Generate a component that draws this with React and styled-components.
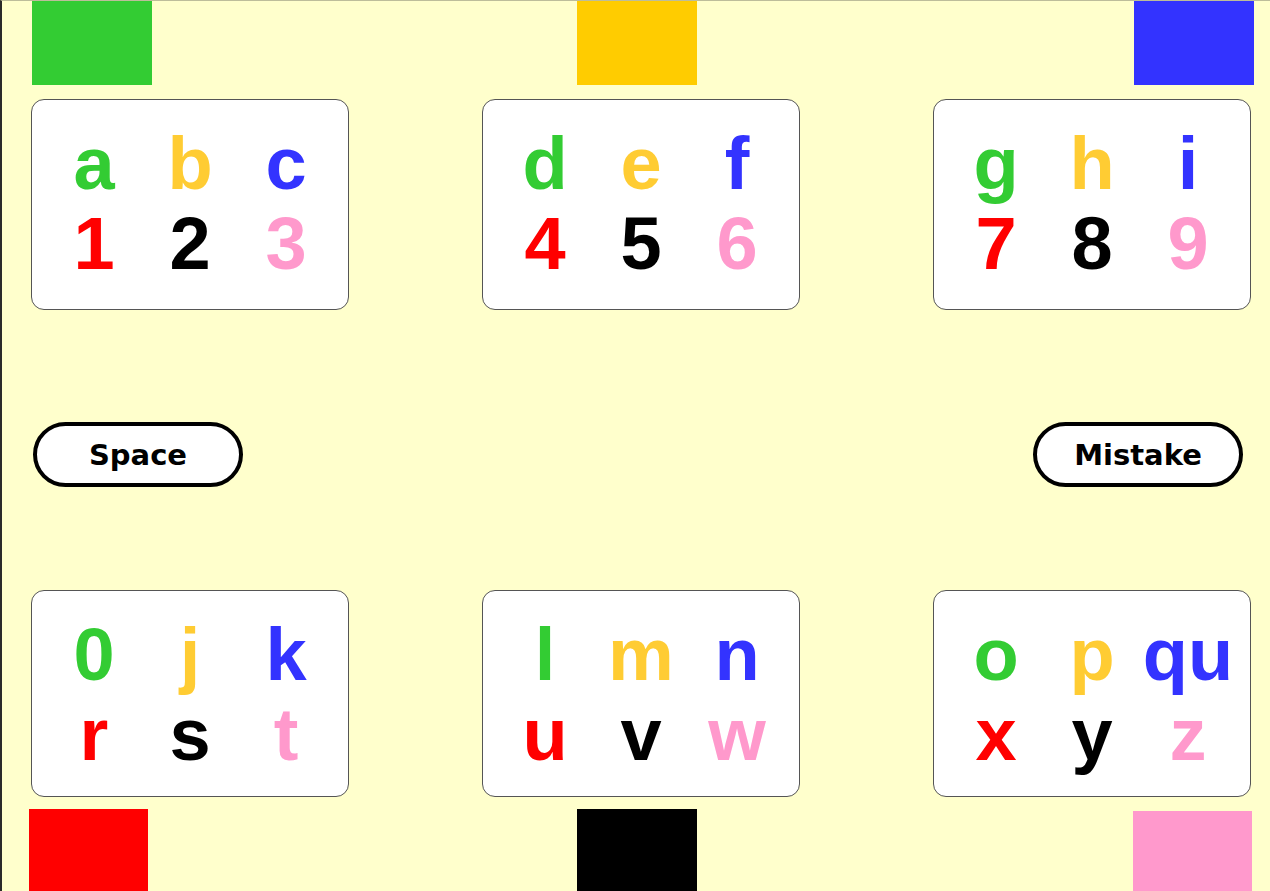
import React from "react";
import styled, { createGlobalStyle } from "styled-components";

const GlobalStyle = createGlobalStyle`
  html, body {
    margin: 0;
    padding: 0;
    background: #ffffcc;
  }
`;

const Page = styled.div`
  width: 1270px;
  height: 891px;
  box-sizing: border-box;
  border-top: 1px solid #bdbd9a;
  border-left: 2px solid #2a2a2a;
  background: #ffffcc;
  display: flex;
  flex-direction: column;
  overflow: hidden;
  font-family: "Liberation Sans", Arial, sans-serif;
`;

const SwatchRow = styled.div`
  display: flex;
  align-items: flex-start;
  height: ${(p) => p.$h}px;
  margin-top: ${(p) => p.$mt || 0}px;
`;

const Swatch = styled.div`
  width: ${(p) => p.$w || 120}px;
  height: 100%;
  margin-left: ${(p) => p.$ml}px;
  margin-top: ${(p) => p.$mt || 0}px;
  background: ${(p) => p.$color};
`;

const CardRow = styled.div`
  display: flex;
  gap: 133px;
  padding-left: 29px;
  margin-top: ${(p) => p.$mt || 0}px;
`;

const Card = styled.div`
  width: 318px;
  height: ${(p) => p.$h}px;
  box-sizing: border-box;
  background: #ffffff;
  border: 1px solid #555;
  border-radius: 13px;
  padding: 24px 0 0 14px;
`;

const Grid = styled.div`
  display: grid;
  grid-template-columns: repeat(3, 96px);
  grid-auto-rows: 80px;
`;

const Glyph = styled.span`
  text-align: center;
  font-size: 74px;
  line-height: 80px;
  font-weight: 700;
  color: ${(p) => p.$color};
`;

const Middle = styled.div`
  height: 280px;
  display: flex;
  align-items: flex-start;
  justify-content: space-between;
  padding: 112px 27px 0 31px;
  box-sizing: border-box;
`;

const PillButton = styled.button`
  width: 210px;
  height: 65px;
  box-sizing: border-box;
  border: 4px solid #000;
  border-radius: 33px;
  background: #ffffff;
  font-family: "DejaVu Sans", Verdana, sans-serif;
  font-weight: 700;
  font-size: 29px;
  color: #000;
  padding: 0;
  cursor: pointer;
`;

const GREEN = "#33cc33";
const YELLOW = "#ffcc33";
const BLUE = "#3333ff";
const RED = "#ff0000";
const BLACK = "#000000";
const PINK = "#ff99cc";

const rowColors = [GREEN, YELLOW, BLUE, RED, BLACK, PINK];

const topCards = [
  ["a", "b", "c", "1", "2", "3"],
  ["d", "e", "f", "4", "5", "6"],
  ["g", "h", "i", "7", "8", "9"],
];

const bottomCards = [
  ["0", "j", "k", "r", "s", "t"],
  ["l", "m", "n", "u", "v", "w"],
  ["o", "p", "qu", "x", "y", "z"],
];

function LetterCard({ chars, height }) {
  return (
    <Card $h={height}>
      <Grid>
        {chars.map((c, i) => (
          <Glyph key={i} $color={rowColors[i]}>
            {c}
          </Glyph>
        ))}
      </Grid>
    </Card>
  );
}

export default function App() {
  return (
    <>
      <GlobalStyle />
      <Page>
        <SwatchRow $h={84}>
          <Swatch $ml={30} $color="#33cc33" />
          <Swatch $ml={425} $color="#ffcc00" />
          <Swatch $ml={437} $color="#3333ff" />
        </SwatchRow>

        <CardRow $mt={14}>
          {topCards.map((c, i) => (
            <LetterCard key={i} chars={c} height={211} />
          ))}
        </CardRow>

        <Middle>
          <PillButton>Space</PillButton>
          <PillButton>Mistake</PillButton>
        </Middle>

        <CardRow>
          {bottomCards.map((c, i) => (
            <LetterCard key={i} chars={c} height={207} />
          ))}
        </CardRow>

        <SwatchRow $h={82} $mt={12}>
          <Swatch $ml={27} $w={119} $color="#ff0000" />
          <Swatch $ml={429} $color="#000000" />
          <Swatch $ml={436} $w={119} $mt={2} $color="#ff99cc" />
        </SwatchRow>
      </Page>
    </>
  );
}
